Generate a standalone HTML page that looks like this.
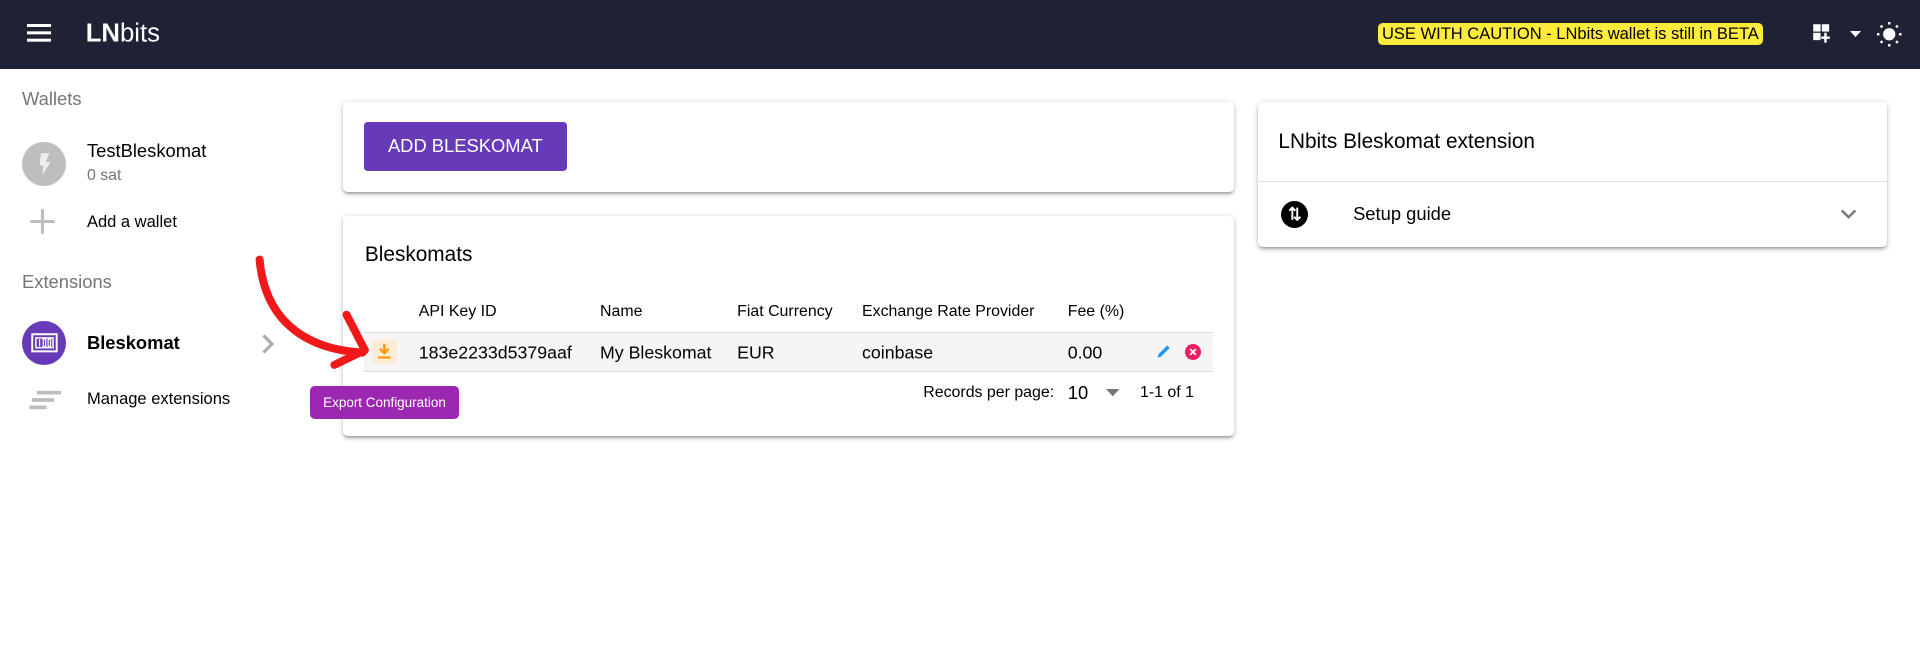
<!DOCTYPE html>
<html><head><meta charset="utf-8"><style>
html{zoom:1.2245}
body{margin:0;width:1568px;height:548px;overflow:hidden;background:#fff;font-family:"Liberation Sans",Arial,sans-serif;color:#000;position:relative}
.a{position:absolute}
.hdr{left:0;top:0;width:1568px;height:56px;background:#1f2234}
.card{background:#fff;border-radius:4px;box-shadow:0 1px 5px rgba(0,0,0,.2),0 2px 2px rgba(0,0,0,.14),0 3px 1px -2px rgba(0,0,0,.12)}
.t{white-space:nowrap;transform:translateY(-50%)}
</style></head><body>
<div class="a hdr"></div>
<div class="a" style="left:22px;top:20px;width:20px;height:2px;background:#fff;box-shadow:0 6px 0 #fff,0 12px 0 #fff"></div>
<div class="a t" style="left:70px;top:28px;color:#fff;font-size:21px"><b>LN</b>bits</div>
<div class="a" style="left:1125px;top:19px;width:315px;height:18px;background:#ffeb3b;border-radius:4px;font-size:13.5px;line-height:18px;text-align:center;white-space:nowrap">USE WITH CAUTION - LNbits wallet is still in BETA</div>
<svg class="a" style="left:1480px;top:19px" width="16" height="18" viewBox="0 0 16 18"><rect x="1" y="1" width="6" height="6" fill="#fff"/><rect x="8" y="1" width="6" height="6" fill="#fff"/><rect x="1" y="8" width="6" height="6" fill="#fff"/><path d="M11 8v8M7.5 12h7" stroke="#fff" stroke-width="2"/></svg>
<svg class="a" style="left:1511px;top:25px" width="9" height="6"><path d="M0 0h9L4.5 5z" fill="#fff"/></svg>
<svg class="a" style="left:1533px;top:18px" width="20" height="20" viewBox="0 0 20 20"><circle cx="10" cy="10" r="5" fill="#fff"/><g stroke="#fff" stroke-width="2"><path d="M10 0v2M10 18v2M0 10h2M18 10h2M3 3l1.4 1.4M15.6 15.6L17 17M3 17l1.4-1.4M15.6 4.4L17 3"/></g></svg>

<div class="a t" style="left:18px;top:81px;font-size:15px;color:#757575">Wallets</div>
<div class="a" style="left:18px;top:116px;width:36px;height:36px;border-radius:50%;background:#bdbdbd"></div>
<svg class="a" style="left:29px;top:124px" width="14" height="20" viewBox="0 0 14 20"><path d="M4 1h7L8 8h4L5 19l1-8H3z" fill="#eee"/></svg>
<div class="a t" style="left:71px;top:123px;font-size:15px">TestBleskomat</div>
<div class="a t" style="left:71px;top:144px;font-size:13px;color:#757575">0 sat</div>
<svg class="a" style="left:24px;top:170px" width="22" height="22"><path d="M11 1v20M1 11h20" stroke="#bdbdbd" stroke-width="2.5"/></svg>
<div class="a t" style="left:71px;top:181px;font-size:13.5px">Add a wallet</div>
<div class="a t" style="left:18px;top:230px;font-size:15px;color:#757575">Extensions</div>
<div class="a" style="left:18px;top:262px;width:36px;height:36px;border-radius:50%;background:#673ab7"></div>
<svg class="a" style="left:25px;top:272px" width="22" height="16" viewBox="0 0 22 16"><rect x="1" y="1" width="20" height="14" fill="none" stroke="#fff" stroke-width="1.6"/><rect x="4" y="4" width="14" height="8" fill="none" stroke="#fff" stroke-width="1.2"/><path d="M7 5v6M10 5h2v6h-2zM14 5h2v6h-2z" stroke="#fff" fill="none" stroke-width="1"/></svg>
<div class="a t" style="left:71px;top:280px;font-size:15px;font-weight:bold">Bleskomat</div>
<svg class="a" style="left:213px;top:272px" width="12" height="18"><path d="M2 2l7 7-7 7" stroke="#aaa" stroke-width="2.5" fill="none"/></svg>
<svg class="a" style="left:22px;top:318px" width="28" height="18"><path d="M8 3h20M4 9h18M2 15h14" stroke="#bdbdbd" stroke-width="3"/></svg>
<div class="a t" style="left:71px;top:326px;font-size:13.5px">Manage extensions</div>

<div class="a card" style="left:280px;top:83px;width:728px;height:74px"></div>
<div class="a" style="left:297px;top:100px;width:166px;height:40px;background:#673ab7;border-radius:3px;color:#fff;font-size:15px;line-height:40px;text-align:center">ADD BLESKOMAT</div>

<div class="a card" style="left:280px;top:176px;width:728px;height:180px"></div>
<div class="a t" style="left:298px;top:208px;font-size:17px">Bleskomats</div>
<div class="a" style="left:297px;top:271px;width:694px;height:31px;background:#f5f5f5;border-top:1px solid #e0e0e0;border-bottom:1px solid #e0e0e0"></div>
<div class="a t" style="left:342px;top:255px;font-size:13px">API Key ID</div>
<div class="a t" style="left:490px;top:255px;font-size:13px">Name</div>
<div class="a t" style="left:602px;top:255px;font-size:13px">Fiat Currency</div>
<div class="a t" style="left:704px;top:255px;font-size:13px">Exchange Rate Provider</div>
<div class="a t" style="left:872px;top:255px;font-size:13px">Fee (%)</div>
<div class="a" style="left:304px;top:277px;width:20px;height:20px;background:#fdebd5;border-radius:3px"></div>
<svg class="a" style="left:308px;top:281px" width="12" height="12"><path d="M6 0v7M2.5 4l3.5 3.5L9.5 4" stroke="#ff9800" stroke-width="2" fill="none"/><path d="M1 11h10" stroke="#ff9800" stroke-width="1.8"/></svg>
<div class="a t" style="left:342px;top:288px;font-size:14.5px">183e2233d5379aaf</div>
<div class="a t" style="left:490px;top:288px;font-size:14.5px">My Bleskomat</div>
<div class="a t" style="left:602px;top:288px;font-size:14.5px">EUR</div>
<div class="a t" style="left:704px;top:288px;font-size:14.5px">coinbase</div>
<div class="a t" style="left:872px;top:288px;font-size:14.5px">0.00</div>
<svg class="a" style="left:943px;top:280px" width="14" height="14"><path d="M2 12l1-3 7-7 2 2-7 7z" fill="#2196f3"/></svg>
<div class="a" style="left:968px;top:281px;width:13px;height:13px;border-radius:50%;background:#e91e63"></div>
<svg class="a" style="left:968px;top:281px" width="13" height="13"><path d="M4.2 4.2l4.6 4.6M8.8 4.2l-4.6 4.6" stroke="#fff" stroke-width="1.5"/></svg>
<div class="a t" style="left:754px;top:321px;font-size:13px">Records per page:</div>
<div class="a t" style="left:872px;top:321px;font-size:15px">10</div>
<svg class="a" style="left:903px;top:318px" width="11" height="6"><path d="M0 0h11L5.5 6z" fill="#777"/></svg>
<div class="a t" style="left:931px;top:321px;font-size:13px">1-1 of 1</div>

<div class="a" style="left:253px;top:315px;width:122px;height:27px;background:#9c27b0;border-radius:4px;color:#fff;font-size:11px;line-height:27px;text-align:center;white-space:nowrap">Export Configuration</div>

<svg class="a" style="left:0;top:0" width="400" height="400"><path d="M212 212 C216 258 245 285 296 288" stroke="#f01818" stroke-width="6.5" fill="none" stroke-linecap="round"/><path d="M283 257 L298 286 L273 298" stroke="#f01818" stroke-width="6.5" fill="none" stroke-linecap="round" stroke-linejoin="round"/></svg>

<div class="a card" style="left:1027px;top:83px;width:514px;height:119px"></div>
<div class="a t" style="left:1044px;top:116px;font-size:17px">LNbits Bleskomat extension</div>
<div class="a" style="left:1027px;top:148px;width:514px;height:1px;background:#ddd"></div>
<div class="a" style="left:1046px;top:164px;width:22px;height:22px;border-radius:50%;background:#000"></div>
<svg class="a" style="left:1049px;top:167px" width="16" height="16"><path d="M6 13V3M3.5 5.5L6 3l2.5 2.5M10 3v10M7.5 10.5L10 13l2.5-2.5" stroke="#fff" stroke-width="1.6" fill="none"/></svg>
<div class="a t" style="left:1105px;top:175px;font-size:15px">Setup guide</div>
<svg class="a" style="left:1503px;top:170px" width="14" height="10"><path d="M1.5 2l5.5 5.5L12.5 2" stroke="#777" stroke-width="2" fill="none"/></svg>
</body></html>
